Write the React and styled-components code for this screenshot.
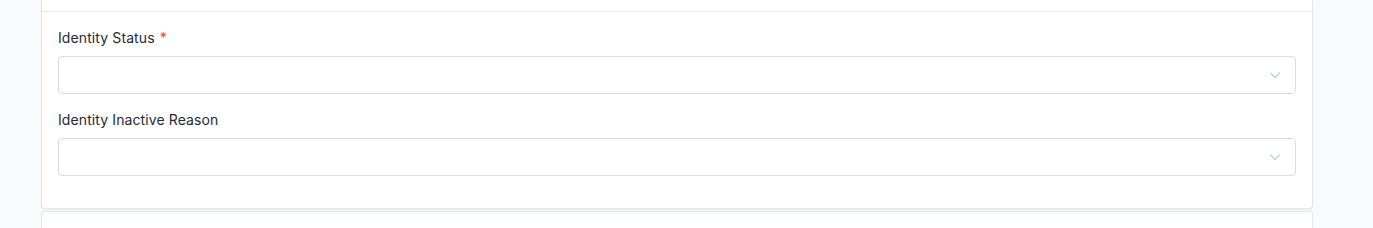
import React from "react";
import styled, { createGlobalStyle } from "styled-components";

const GlobalStyle = createGlobalStyle`
  html, body {
    margin: 0;
    padding: 0;
    background: #f9fafb;
    font-family: Inter, "Noto Sans", sans-serif;
  }
`;

const Page = styled.div`
  display: flex;
  flex-direction: column;
  gap: 2px;
  padding: 0 60px 0 41px;
  height: 228px;
  overflow: hidden;
`;

const Card = styled.section`
  background: #ffffff;
  border: 1px solid #e5e7eb;
  border-top: none;
  border-radius: 0 0 4px 4px;
  box-shadow: 0 1px 2px rgba(0, 0, 0, 0.06);
`;

const CardHeader = styled.div`
  height: 11px;
  border-bottom: 1px solid #e5e7eb;
`;

const CardBody = styled.div`
  padding: 16px 16px 16px;
`;

const NextCard = styled.section`
  background: #ffffff;
  border: 1px solid #e5e7eb;
  border-bottom: none;
  border-radius: 4px 4px 0 0;
  height: 40px;
`;

const Field = styled.div`
  display: flex;
  flex-direction: column;
  gap: 8px;
  margin-bottom: 16px;
`;

const Label = styled.label`
  font-size: 14px;
  line-height: 20px;
  letter-spacing: 0.1px;
  color: #1f2937;
`;

const Required = styled.span`
  color: #e0443e;
  margin-left: 5px;
`;

const Select = styled.div`
  height: 36px;
  border: 1px solid #d9dce1;
  border-radius: 4px;
  display: flex;
  align-items: center;
  justify-content: flex-end;
  padding: 0 14px;
  background: #fff;
`;

const Chevron = () => (
  <svg width="12" height="12" viewBox="0 0 12 12" fill="none">
    <path d="M1.5 4l4.5 4.5L10.5 4" stroke="#c5c8cd" strokeWidth="1.1" strokeLinecap="round" strokeLinejoin="round" />
  </svg>
);

export default function App() {
  return (
    <>
      <GlobalStyle />
      <Page>
        <Card>
          <CardHeader />
          <CardBody>
            <Field>
              <Label>
                Identity Status<Required>*</Required>
              </Label>
              <Select>
                <Chevron />
              </Select>
            </Field>
            <Field>
              <Label>Identity Inactive Reason</Label>
              <Select>
                <Chevron />
              </Select>
            </Field>
          </CardBody>
        </Card>
        <NextCard />
      </Page>
    </>
  );
}
